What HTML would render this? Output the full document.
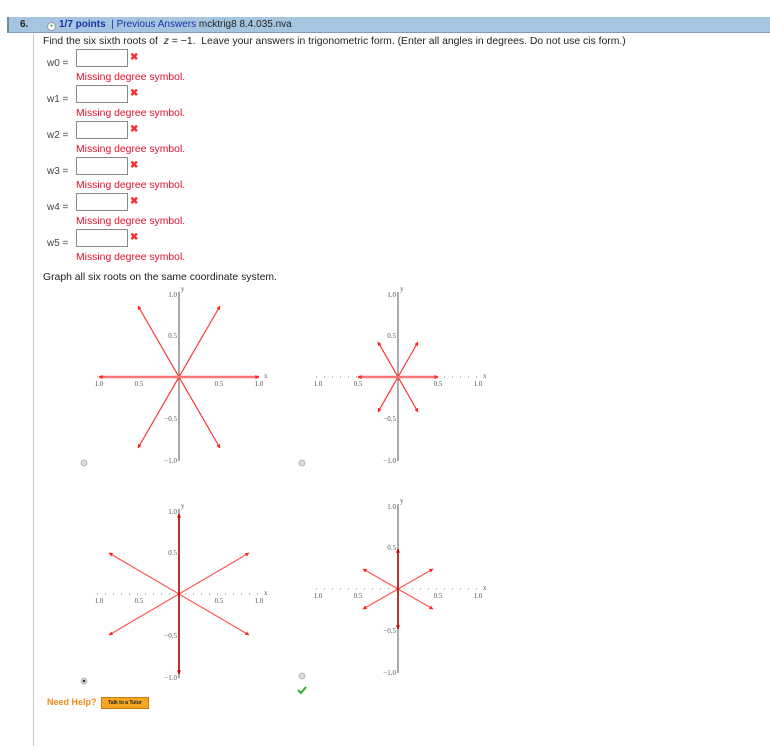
<!DOCTYPE html>
<html><head><meta charset="utf-8"><style>
body{margin:0;width:770px;height:746px;background:#fff;position:relative;overflow:hidden;font-family:"Liberation Sans",Verdana,sans-serif;}
.hdr{position:absolute;left:7px;top:17px;width:763px;height:16px;background:#a6c5e1;border-bottom:1px solid #7f9db8;border-left:2px solid #6f8aa3;box-sizing:border-box;font-size:10px;line-height:15px;}
.vl{position:absolute;left:33px;top:34px;width:1px;height:712px;background:#c8c8c8;}
.t{position:absolute;font-size:10.4px;color:#222;white-space:nowrap;}
.box{position:absolute;left:76px;width:50px;height:16px;border:1px solid #888;background:#fff;}
.x{position:absolute;left:130px;color:#e33;font-size:10px;font-weight:bold;}
.err{position:absolute;left:76px;color:#e0102a;font-size:10.4px;}
.w{position:absolute;left:47px;font-size:10px;color:#444;}
svg{position:absolute;left:0;top:0;}
</style></head><body>
<div class="hdr"><span style="position:absolute;left:11px;font-weight:bold;color:#222">6.</span>
<span style="position:absolute;left:38px;color:#1d30a8"><span style="display:inline-block;width:7px;height:7px;border-radius:50%;background:#fff;border:1px solid #999;vertical-align:-1px;margin-right:3px;font-size:7px;line-height:7px;text-align:center;color:#2a2">+</span><b>1/7 points</b> &nbsp;| Previous Answers <span style="color:#222">mcktrig8 8.4.035.nva</span></span></div>
<div class="vl"></div>
<div class="t" style="left:43px;top:36px">Find the six sixth roots of &nbsp;<i>z</i> = −1. &nbsp;Leave your answers in trigonometric form. (Enter all angles in degrees. Do not use cis form.)</div>

<div class="w" style="top:58px">w0 =</div><div class="box" style="top:49px"></div><div class="x" style="top:52px">✖</div><div class="err" style="top:72px">Missing degree symbol.</div>
<div class="w" style="top:94px">w1 =</div><div class="box" style="top:85px"></div><div class="x" style="top:88px">✖</div><div class="err" style="top:108px">Missing degree symbol.</div>
<div class="w" style="top:130px">w2 =</div><div class="box" style="top:121px"></div><div class="x" style="top:124px">✖</div><div class="err" style="top:144px">Missing degree symbol.</div>
<div class="w" style="top:166px">w3 =</div><div class="box" style="top:157px"></div><div class="x" style="top:160px">✖</div><div class="err" style="top:180px">Missing degree symbol.</div>
<div class="w" style="top:202px">w4 =</div><div class="box" style="top:193px"></div><div class="x" style="top:196px">✖</div><div class="err" style="top:216px">Missing degree symbol.</div>
<div class="w" style="top:238px">w5 =</div><div class="box" style="top:229px"></div><div class="x" style="top:232px">✖</div><div class="err" style="top:252px">Missing degree symbol.</div>
<div class="t" style="left:43px;top:272px">Graph all six roots on the same coordinate system.</div>

<svg width="770" height="746" viewBox="0 0 770 746">
<defs>
<marker id="a" viewBox="0 0 10 10" refX="9" refY="5" markerWidth="5" markerHeight="4" markerUnits="userSpaceOnUse" orient="auto"><path d="M0 0L10 5L0 10z" fill="#f22"/></marker>
<marker id="b" viewBox="0 0 10 10" refX="9" refY="5" markerWidth="5" markerHeight="4" markerUnits="userSpaceOnUse" orient="auto"><path d="M0 0L10 5L0 10z" fill="#c00"/></marker>
<g id="ax" font-family="Liberation Serif,serif" font-size="7" fill="#555">
<line x1="0" y1="-85" x2="0" y2="84" stroke="#555" stroke-width="1"/>
<line x1="-82" y1="0" x2="82" y2="0" stroke="#aaa" stroke-width="1.5" stroke-dasharray="1 7"/>
<text x="-2" y="-80" text-anchor="end">1.0</text><text x="-2" y="-39" text-anchor="end">0.5</text>
<text x="-2" y="44" text-anchor="end">−0.5</text><text x="-2" y="86" text-anchor="end">−1.0</text>
<text x="2" y="-86">y</text><text x="85" y="1">x</text>
<text x="-80" y="9" text-anchor="middle">1.0</text><text x="-40" y="9" text-anchor="middle">0.5</text>
<text x="40" y="9" text-anchor="middle">0.5</text><text x="80" y="9" text-anchor="middle">1.0</text>
</g>
</defs>
<g transform="translate(179,377)"><use href="#ax"/>
<g stroke="#f33" stroke-width="1.2" marker-end="url(#a)"><line x1="0" y1="0" x2="41" y2="-71"/><line x1="0" y1="0" x2="-41" y2="-71"/><line x1="0" y1="0" x2="41" y2="71"/><line x1="0" y1="0" x2="-41" y2="71"/></g>
<g stroke="#f77" stroke-width="2.5" marker-end="url(#a)"><line x1="0" y1="0" x2="80" y2="0"/><line x1="0" y1="0" x2="-80" y2="0"/></g></g>
<g transform="translate(398,377)"><use href="#ax"/>
<g stroke="#f33" stroke-width="1.2" marker-end="url(#a)"><line x1="0" y1="0" x2="20" y2="-35"/><line x1="0" y1="0" x2="-20" y2="-35"/><line x1="0" y1="0" x2="20" y2="35"/><line x1="0" y1="0" x2="-20" y2="35"/></g>
<g stroke="#f77" stroke-width="2.5" marker-end="url(#a)"><line x1="0" y1="0" x2="40" y2="0"/><line x1="0" y1="0" x2="-40" y2="0"/></g></g>
<g transform="translate(179,594)"><use href="#ax"/>
<g stroke="#f55" stroke-width="1.2" marker-end="url(#a)"><line x1="0" y1="0" x2="70" y2="-41"/><line x1="0" y1="0" x2="-70" y2="-41"/><line x1="0" y1="0" x2="70" y2="41"/><line x1="0" y1="0" x2="-70" y2="41"/></g>
<g stroke="#a00" stroke-width="1.6" marker-end="url(#b)"><line x1="0" y1="0" x2="0" y2="-80"/><line x1="0" y1="0" x2="0" y2="80"/></g></g>
<g transform="translate(398,589)"><use href="#ax"/>
<g stroke="#f55" stroke-width="1.2" marker-end="url(#a)"><line x1="0" y1="0" x2="35" y2="-20"/><line x1="0" y1="0" x2="-35" y2="-20"/><line x1="0" y1="0" x2="35" y2="20"/><line x1="0" y1="0" x2="-35" y2="20"/></g>
<g stroke="#a00" stroke-width="1.6" marker-end="url(#b)"><line x1="0" y1="0" x2="0" y2="-40"/><line x1="0" y1="0" x2="0" y2="40"/></g></g>
<g fill="#ddd" stroke="#aaa" stroke-width="0.8"><circle cx="84" cy="463" r="3"/><circle cx="302" cy="463" r="3"/><circle cx="84" cy="681" r="3"/><circle cx="302" cy="676" r="3"/></g>
<circle cx="84" cy="681" r="1.3" fill="#333"/>
<path d="M298 690l3 3l5-6" stroke="#3a3" stroke-width="2" fill="none"/>
</svg>
<div class="t" style="left:47px;top:697px;color:#f08a1c;font-size:9px;font-weight:bold">Need Help?</div>
<div style="position:absolute;left:101px;top:697px;width:46px;height:10px;background:#f5a623;border:1px solid #c97a10;font-size:5px;font-weight:bold;line-height:10px;text-align:center;color:#222;font-family:'Liberation Sans',sans-serif">Talk to a Tutor</div>
</body></html>
